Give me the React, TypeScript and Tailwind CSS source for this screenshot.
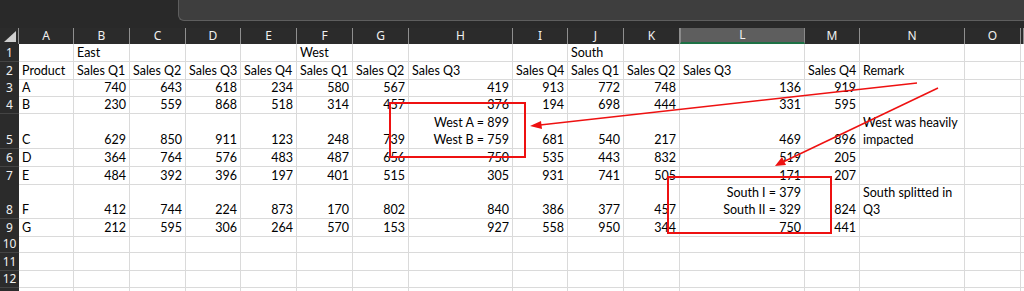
import React from "react";

type Cell = string | { t: string; r?: boolean };

const cols = ["A", "B", "C", "D", "E", "F", "G", "H", "I", "J", "K", "L", "M", "N", "O", ""];
const gridCols =
  "grid grid-cols-[19px_55px_56px_56px_55px_56px_56px_56px_104px_55px_56px_56px_125px_55px_105px_56px_1fr]";

const rows: { n: number; h: string; cells: Cell[] }[] = [
  { n: 1, h: "h-[18px]", cells: ["", "East", "", "", "", "West", "", "", "", "South", "", "", "", "", ""] },
  {
    n: 2,
    h: "h-[17px]",
    cells: [
      "Product", "Sales Q1", "Sales Q2", "Sales Q3", "Sales Q4", "Sales Q1", "Sales Q2", "Sales Q3",
      "Sales Q4", "Sales Q1", "Sales Q2", "Sales Q3", "Sales Q4", "Remark", "",
    ],
  },
  { n: 3, h: "h-[17px]", cells: ["A", "740", "643", "618", "234", "580", "567", "419", "913", "772", "748", "136", "919", "", ""] },
  { n: 4, h: "h-[18px]", cells: ["B", "230", "559", "868", "518", "314", "457", "376", "194", "698", "444", "331", "595", "", ""] },
  {
    n: 5,
    h: "h-[35px]",
    cells: [
      "C", "629", "850", "911", "123", "248", "739", { t: "West A = 899\nWest B = 759", r: true },
      "681", "540", "217", "469", "896", { t: "West was heavily\nimpacted" }, "",
    ],
  },
  { n: 6, h: "h-[18px]", cells: ["D", "364", "764", "576", "483", "487", "656", "750", "535", "443", "832", "519", "205", "", ""] },
  { n: 7, h: "h-[17px]", cells: ["E", "484", "392", "396", "197", "401", "515", "305", "931", "741", "505", "171", "207", "", ""] },
  {
    n: 8,
    h: "h-[35px]",
    cells: [
      "F", "412", "744", "224", "873", "170", "802", "840", "386", "377", "457",
      { t: "South I = 379\nSouth II = 329", r: true }, "824", { t: "South splitted in\nQ3" }, "",
    ],
  },
  { n: 9, h: "h-[17px]", cells: ["G", "212", "595", "306", "264", "570", "153", "927", "558", "950", "344", "750", "441", "", ""] },
  { n: 10, h: "h-[17px]", cells: Array(15).fill("") },
  { n: 11, h: "h-[18px]", cells: Array(15).fill("") },
  { n: 12, h: "h-[17px]", cells: Array(15).fill("") },
  { n: 0, h: "h-[17px]", cells: Array(15).fill("") },
];

function DataCell({ c }: { c: Cell }) {
  const t = typeof c === "string" ? c : c.t;
  const right = typeof c === "string" ? /^\d+$/.test(c) : !!c.r;
  return (
    <div
      className={`flex items-end border-r border-b border-[#dadada] px-[3px] overflow-visible whitespace-pre leading-[17px] text-[12.5px] text-black ${
        right ? "justify-end text-right" : "justify-start text-left"
      }`}
    >
      <span>{t}</span>
    </div>
  );
}

export default function App() {
  return (
    <div
      className="relative w-[1024px] h-[291px] overflow-hidden bg-white"
      style={{ fontFamily: "Lato, 'Open Sans', sans-serif" }}
    >
      {/* top bar */}
      <div className="h-[28px] bg-[#292929] pl-[178px]">
        <div className="h-[21px] rounded-bl-[6px] border-l border-b border-[#5e5e5e] bg-[#3e3e3e]" />
      </div>

      {/* column header */}
      <div
        className={`${gridCols} h-[16px] bg-[#2b2b2b] text-[12px] text-[#f0f0f0]`}
        style={{ fontFamily: "'Noto Sans', 'Open Sans', sans-serif" }}
      >
        <div className="relative border-r border-[#8f8f8f]">
          <div className="absolute right-[2px] bottom-[2px] w-0 h-0 border-l-[12px] border-l-transparent border-b-[11px] border-b-[#cfcfcf]" />
        </div>
        {cols.map((c, i) =>
          c === "L" ? (
            <div
              key={i}
              className="flex items-center justify-center border-x border-[#8a8a8a] border-b-2 border-b-[#1e7145] bg-[#5e5e5e] leading-none"
            >
              {c}
            </div>
          ) : (
            <div key={i} className="flex items-center justify-center border-r border-[#8f8f8f] leading-none">
              {c}
            </div>
          )
        )}
      </div>

      {/* rows */}
      {rows.map((r, idx) => (
        <div key={idx} className={`${gridCols} ${r.h}`}>
          <div
            className="flex items-end justify-center border-b border-[#444444] bg-[#2b2b2b] text-[12px] leading-[16px] text-[#f0f0f0]"
            style={{ fontFamily: "'Noto Sans', 'Open Sans', sans-serif" }}
          >
            {r.n > 0 ? r.n : ""}
          </div>
          {r.cells.map((c, i) => (
            <DataCell key={i} c={c} />
          ))}
          <div className="border-b border-[#dadada]" />
        </div>
      ))}

      {/* annotations */}
      <svg className="pointer-events-none absolute left-0 top-0" width="1024" height="291" viewBox="0 0 1024 291">
        <rect x="390" y="103" width="135" height="54" fill="none" stroke="#ee1111" strokeWidth="2" />
        <rect x="668" y="177" width="163" height="56" fill="none" stroke="#ee1111" strokeWidth="2" />
        <line x1="917" y1="83" x2="540" y2="125" stroke="#ee1111" strokeWidth="1.5" />
        <polygon points="530,126 541,121 542,129" fill="#ee1111" />
        <line x1="938" y1="88" x2="784" y2="161.5" stroke="#ee1111" strokeWidth="1.5" />
        <polygon points="775,166 782,157 786,165" fill="#ee1111" />
      </svg>
    </div>
  );
}
